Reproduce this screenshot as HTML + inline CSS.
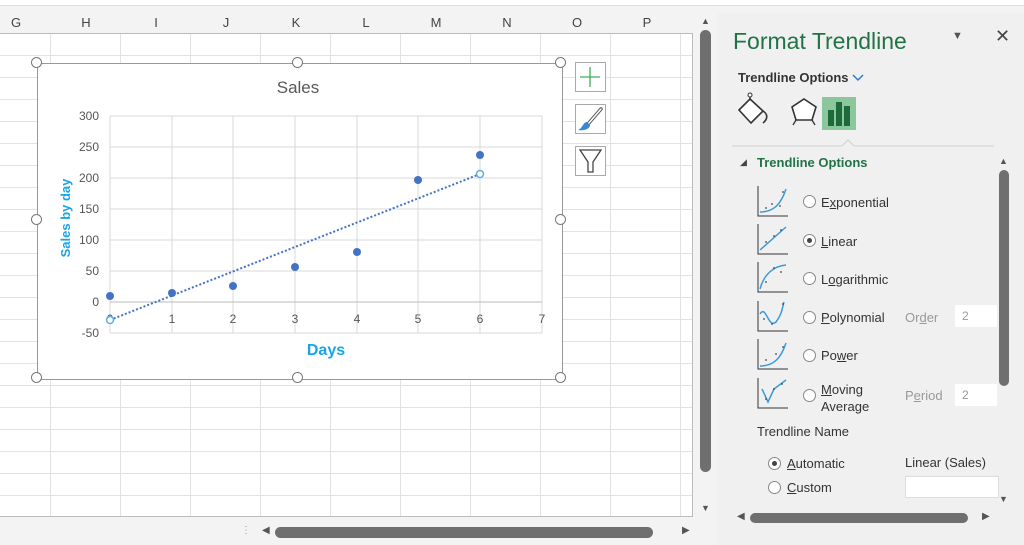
<!DOCTYPE html>
<html><head><style>
body{margin:0;width:1024px;height:545px;overflow:hidden;background:#f3f3f3;font-family:"Liberation Sans",sans-serif;position:relative}
.a{position:absolute}
.hd{font-size:13px;color:#444;text-align:center;width:70px;top:15px}
.t{font-size:13px;color:#333}
.rad{width:11px;height:11px;border:1px solid #888;border-radius:50%;background:#fff}
.h{width:9px;height:9px;border:1.5px solid #777;border-radius:50%;background:#fff}
</style></head><body>
<div class="a" style="left:0;top:0;width:1024px;height:5px;background:#fff;border-bottom:1px solid #ddd"></div>
<div class="a" style="left:0;top:33px;width:692px;height:483px;background:#fff;border-right:1px solid #bbb;border-bottom:1px solid #bbb;
background-image:linear-gradient(#e2e2e2 1px,transparent 1px),linear-gradient(90deg,#e2e2e2 1px,transparent 1px);background-size:70px 22px;background-position:50px 0,50px 0"></div>
<div class="a" style="left:0;top:33px;width:692px;height:1px;background:#bbb"></div>
<div class="a hd" style="left:-19px">G</div><div class="a hd" style="left:51px">H</div><div class="a hd" style="left:121px">I</div><div class="a hd" style="left:191px">J</div><div class="a hd" style="left:261px">K</div><div class="a hd" style="left:331px">L</div><div class="a hd" style="left:401px">M</div><div class="a hd" style="left:472px">N</div><div class="a hd" style="left:542px">O</div><div class="a hd" style="left:612px">P</div>
<div class="a" style="left:700px;top:30px;width:11px;height:442px;background:#6f6f6f;border-radius:6px"></div>
<div class="a" style="left:701px;top:16px;font-size:9px;color:#555">▲</div>
<div class="a" style="left:701px;top:503px;font-size:9px;color:#555">▼</div>
<div class="a" style="left:275px;top:527px;width:378px;height:11px;background:#6f6f6f;border-radius:6px"></div>
<div class="a" style="left:262px;top:525px;font-size:10px;color:#555">◀</div>
<div class="a" style="left:682px;top:525px;font-size:10px;color:#555">▶</div>
<div class="a" style="left:241px;top:525px;font-size:10px;color:#999">⋮</div>
<div class="a" style="left:37px;top:63px;width:524px;height:315px;background:#fff;border:1px solid #999"></div>
<div class="a h" style="left:31px;top:57px"></div><div class="a h" style="left:292px;top:57px"></div><div class="a h" style="left:555px;top:57px"></div>
<div class="a h" style="left:31px;top:214px"></div><div class="a h" style="left:555px;top:214px"></div>
<div class="a h" style="left:31px;top:372px"></div><div class="a h" style="left:292px;top:372px"></div><div class="a h" style="left:555px;top:372px"></div>
<svg class="a" style="left:0;top:0" width="700" height="400">
<g stroke="#d9d9d9" stroke-width="1">
<line x1="110" y1="116" x2="542" y2="116"/><line x1="110" y1="147" x2="542" y2="147"/><line x1="110" y1="178" x2="542" y2="178"/><line x1="110" y1="209" x2="542" y2="209"/><line x1="110" y1="240" x2="542" y2="240"/><line x1="110" y1="271" x2="542" y2="271"/><line x1="110" y1="333" x2="542" y2="333"/>
<line x1="110" y1="116" x2="110" y2="333"/><line x1="172" y1="116" x2="172" y2="333"/><line x1="233" y1="116" x2="233" y2="333"/><line x1="295" y1="116" x2="295" y2="333"/><line x1="357" y1="116" x2="357" y2="333"/><line x1="418" y1="116" x2="418" y2="333"/><line x1="480" y1="116" x2="480" y2="333"/><line x1="542" y1="116" x2="542" y2="333"/>
</g>
<line x1="110" y1="302" x2="542" y2="302" stroke="#bbb"/>
<g font-size="12" fill="#555" text-anchor="end" font-family="Liberation Sans">
<text x="99" y="120">300</text><text x="99" y="151">250</text><text x="99" y="182">200</text><text x="99" y="213">150</text><text x="99" y="244">100</text><text x="99" y="275">50</text><text x="99" y="306">0</text><text x="99" y="337">-50</text></g>
<g font-size="12" fill="#555" text-anchor="middle" font-family="Liberation Sans">
<text x="110" y="323">0</text><text x="172" y="323">1</text><text x="233" y="323">2</text><text x="295" y="323">3</text><text x="357" y="323">4</text><text x="418" y="323">5</text><text x="480" y="323">6</text><text x="542" y="323">7</text></g>
<text x="298" y="93" font-size="17" fill="#595959" text-anchor="middle" font-family="Liberation Sans">Sales</text>
<text x="326" y="355" font-size="16" font-weight="bold" fill="#1aa3e8" text-anchor="middle" font-family="Liberation Sans">Days</text>
<text transform="translate(70,218) rotate(-90)" font-size="13" font-weight="bold" fill="#1aa3e8" text-anchor="middle" font-family="Liberation Sans">Sales by day</text>
<line x1="110" y1="320" x2="480" y2="174" stroke="#4472c4" stroke-width="2" stroke-dasharray="2,2"/>
<g fill="#4472c4"><circle cx="110" cy="296" r="4"/><circle cx="172" cy="293" r="4"/><circle cx="233" cy="286" r="4"/><circle cx="295" cy="267" r="4"/><circle cx="357" cy="252" r="4"/><circle cx="418" cy="180" r="4"/><circle cx="480" cy="155" r="4"/></g>
<circle cx="110" cy="320" r="3.5" fill="#fff" stroke="#5aaee8" stroke-width="1.5"/><circle cx="480" cy="174" r="3.5" fill="#fff" stroke="#5aaee8" stroke-width="1.5"/>
<rect x="575.5" y="62.5" width="30" height="29" fill="#fff" stroke="#aaa"/>
<path d="M590 67V87M580 77H600" stroke="#3cb054" stroke-width="1.3"/>
<rect x="575.5" y="104.5" width="30" height="29" fill="#fff" stroke="#aaa"/>
<path d="M601 109L588 124" stroke="#555" stroke-width="3.5" stroke-linecap="round"/><path d="M601 109L588 124" stroke="#fff" stroke-width="1.5" stroke-linecap="round"/>
<path d="M587 122C583 122 583 128 578 130C584 131 590 129 590 125Z" fill="#3a86d4"/>
<rect x="575.5" y="146.5" width="30" height="29" fill="#fff" stroke="#aaa"/>
<path d="M580 150H601L593 162V172H588V162Z" fill="none" stroke="#444" stroke-width="1.3"/>
</svg>
<div class="a" style="left:718px;top:14px;width:306px;height:531px;background:#f0f0f0"></div>
<div class="a" style="left:733px;top:28px;font-size:23px;color:#217346">Format Trendline</div>
<div class="a" style="left:952px;top:30px;font-size:11px;color:#555">▼</div>
<div class="a" style="left:995px;top:26px;font-size:18px;color:#444">✕</div>
<div class="a" style="left:738px;top:70px;font-size:13px;font-weight:bold;color:#333">Trendline Options</div>
<svg class="a" style="left:852px;top:72px" width="12" height="10"><path d="M1 3L6 8L11 3" fill="none" stroke="#2b7cd3" stroke-width="1.5"/></svg>
<svg class="a" style="left:730px;top:92px" width="270" height="60">
<path d="M9 18L20 7L33 19L21 31Z" fill="#fff" stroke="#333" stroke-width="1.6"/><path d="M33 19C38 22 38 27 33 31" fill="none" stroke="#333" stroke-width="1.6"/><path d="M20 7V3" stroke="#333" stroke-width="1.5"/><circle cx="20" cy="3" r="2" fill="#fff" stroke="#333"/>
<path d="M74 7L86 15L82 28H66L62 15Z" fill="#fff" stroke="#333" stroke-width="1.6"/><path d="M66 28L63 33M82 28L85 33" stroke="#333" stroke-width="1.3"/>
<rect x="92" y="5" width="34" height="33" fill="#8cc69c"/>
<rect x="98" y="18" width="6" height="16" fill="#1d6b38"/><rect x="106" y="10" width="6" height="24" fill="#1d6b38"/><rect x="114" y="14" width="6" height="20" fill="#1d6b38"/>
<path d="M2 54H112L118 48L124 54H264" fill="none" stroke="#d0d0d0"/>
</svg>
<div class="a" style="left:740px;top:157px;font-size:9px;color:#444">◢</div>
<div class="a" style="left:757px;top:155px;font-size:13px;font-weight:bold;color:#217346">Trendline Options</div>
<div class="a" style="left:999px;top:170px;width:10px;height:216px;background:#6f6f6f;border-radius:5px"></div>
<div class="a" style="left:999px;top:156px;font-size:9px;color:#555">▲</div>
<div class="a" style="left:999px;top:494px;font-size:9px;color:#555">▼</div>
<svg class="a" style="left:756px;top:184px" width="40" height="230" fill="none" stroke="#3a9ad9" stroke-width="1.5">
<g stroke="#333" stroke-width="1"><path d="M2 2V32H32"/><path d="M2 40V70H32"/><path d="M2 78V108H32"/><path d="M2 117V147H32"/><path d="M2 155V185H32"/><path d="M2 194V224H32"/></g>
<path d="M4 28C18 28 25 20 30 5"/><path d="M4 66L30 43"/><path d="M4 105C8 90 18 82 30 81"/><path d="M4 130C10 120 12 145 20 138C26 130 26 125 28 118"/><path d="M4 182C18 182 25 174 30 159"/><path d="M6 205L12 218L18 205L30 196"/>
<g fill="#444" stroke="none"><circle cx="10" cy="24" r=".9"/><circle cx="16" cy="20" r=".9"/><circle cx="24" cy="22" r=".9"/><circle cx="27" cy="8" r=".9"/><circle cx="10" cy="58" r=".9"/><circle cx="18" cy="52" r=".9"/><circle cx="25" cy="46" r=".9"/><circle cx="10" cy="98" r=".9"/><circle cx="18" cy="84" r=".9"/><circle cx="25" cy="88" r=".9"/><circle cx="8" cy="135" r=".9"/><circle cx="16" cy="140" r=".9"/><circle cx="27" cy="120" r=".9"/><circle cx="10" cy="176" r=".9"/><circle cx="20" cy="170" r=".9"/><circle cx="27" cy="163" r=".9"/><circle cx="10" cy="215" r=".9"/><circle cx="18" cy="205" r=".9"/><circle cx="26" cy="200" r=".9"/></g>
</svg>
<div class="a rad" style="left:803px;top:195px"></div><div class="a t" style="left:821px;top:195px">E<u>x</u>ponential</div>
<div class="a rad" style="left:803px;top:234px"><div style="width:5px;height:5px;background:#444;border-radius:50%;margin:3px"></div></div><div class="a t" style="left:821px;top:234px"><u>L</u>inear</div>
<div class="a rad" style="left:803px;top:272px"></div><div class="a t" style="left:821px;top:272px">L<u>o</u>garithmic</div>
<div class="a rad" style="left:803px;top:311px"></div><div class="a t" style="left:821px;top:310px"><u>P</u>olynomial</div>
<div class="a t" style="left:905px;top:310px;color:#999">Or<u>d</u>er</div>
<div class="a" style="left:955px;top:305px;width:42px;height:22px;background:#fff;font-size:12px;color:#999;line-height:22px;text-indent:7px">2</div>
<div class="a rad" style="left:803px;top:349px"></div><div class="a t" style="left:821px;top:348px">Po<u>w</u>er</div>
<div class="a rad" style="left:803px;top:389px"></div><div class="a t" style="left:821px;top:381px;line-height:17px"><u>M</u>oving<br>Average</div>
<div class="a t" style="left:905px;top:388px;color:#999">P<u>e</u>riod</div>
<div class="a" style="left:955px;top:384px;width:42px;height:22px;background:#fff;font-size:12px;color:#999;line-height:22px;text-indent:7px">2</div>
<div class="a t" style="left:757px;top:424px">Trendline Name</div>
<div class="a rad" style="left:768px;top:457px"><div style="width:5px;height:5px;background:#444;border-radius:50%;margin:3px"></div></div><div class="a t" style="left:787px;top:456px"><u>A</u>utomatic</div>
<div class="a t" style="left:905px;top:455px">Linear (Sales)</div>
<div class="a rad" style="left:768px;top:481px"></div><div class="a t" style="left:787px;top:480px"><u>C</u>ustom</div>
<div class="a" style="left:905px;top:476px;width:92px;height:20px;background:#fff;border:1px solid #ddd"></div>
<div class="a" style="left:750px;top:513px;width:218px;height:10px;background:#6f6f6f;border-radius:5px"></div>
<div class="a" style="left:737px;top:511px;font-size:10px;color:#555">◀</div>
<div class="a" style="left:982px;top:511px;font-size:10px;color:#555">▶</div>
</body></html>
